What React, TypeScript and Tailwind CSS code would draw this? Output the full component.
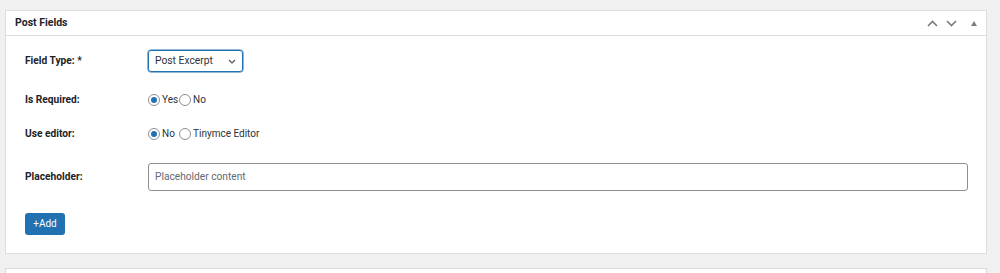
import React from "react";

function Radio({ checked }: { checked?: boolean }) {
  return (
    <span className="flex h-[12px] w-[12px] shrink-0 items-center justify-center rounded-full border border-[#8c8f94] bg-white">
      {checked && <span className="h-[6px] w-[6px] rounded-full bg-[#2271b1]" />}
    </span>
  );
}

function Label({ children }: { children: React.ReactNode }) {
  return <div className="w-[123px] shrink-0 text-[10.2px] font-bold leading-[14px] text-[#1d2327]">{children}</div>;
}

function RadioGroup({ options, value }: { options: string[]; value: string }) {
  return (
    <div className="flex items-center text-[10px] leading-[14px]">
      {options.map((opt, i) => (
        <label key={opt} className={i === 0 ? "flex w-[31px] items-center" : "flex items-center"}>
          <Radio checked={opt === value} />
          <span className="ml-[2px]">{opt}</span>
        </label>
      ))}
    </div>
  );
}

export default function App() {
  return (
    <div className="h-[273px] w-[1000px] overflow-hidden bg-[#f0f0f1] pl-[5px] pr-[13px] pt-[10px] font-['Roboto',sans-serif] text-[#2c3338]">
      <div className="border border-[#dcdcde] bg-white">
        <div className="flex h-[25px] items-center justify-between border-b border-[#dcdcde] pl-[9px] pr-[9px]">
          <h2 className="text-[10.5px] font-bold text-[#1d2327]">Post Fields</h2>
          <div className="flex items-center gap-[8px] text-[#787c82]">
            <svg width="11" height="7" viewBox="0 0 11 7" fill="none" stroke="currentColor" strokeWidth="1.6">
              <path d="M1 6l4.5-4.5L10 6" />
            </svg>
            <svg width="11" height="7" viewBox="0 0 11 7" fill="none" stroke="currentColor" strokeWidth="1.6">
              <path d="M1 1l4.5 4.5L10 1" />
            </svg>
            <svg width="6" height="5" viewBox="0 0 6 5" className="ml-[6px]" fill="currentColor">
              <path d="M3 0L6 5H0z" />
            </svg>
          </div>
        </div>

        <div className="flex flex-col pb-[18px] pl-[19px] pr-[18px] pt-[14px]">
          <div className="flex h-[22px] items-center">
            <Label>Field Type: *</Label>
            <div className="flex h-[22px] w-[95px] items-center justify-between rounded-[3px] border border-[#2271b1] pl-[6px] pr-[6px] text-[10.3px] text-[#2c3338] shadow-[0_0_0_0.5px_#2271b1]">
              <span>Post Excerpt</span>
              <svg width="8" height="5" viewBox="0 0 8 5" fill="none" stroke="#50575e" strokeWidth="1.2">
                <path d="M1 1l3 3 3-3" />
              </svg>
            </div>
          </div>

          <div className="mt-[21px] flex h-[14px] items-center">
            <Label>Is Required:</Label>
            <RadioGroup options={["Yes", "No"]} value="Yes" />
          </div>

          <div className="mt-[20px] flex h-[14px] items-center">
            <Label>Use editor:</Label>
            <RadioGroup options={["No", "Tinymce Editor"]} value="No" />
          </div>

          <div className="mt-[22px] flex h-[28px] items-center">
            <Label>Placeholder:</Label>
            <div className="flex h-[28px] flex-1 items-center rounded-[3px] border border-[#8c8f94] pl-[6px] text-[10.2px] text-[#646970]">
              Placeholder content
            </div>
          </div>

          <div className="mt-[22px] flex h-[22px]">
            <button className="h-[22px] w-[40px] rounded-[3px] bg-[#2271b1] text-[10px] leading-[14px] text-white">+Add</button>
          </div>
        </div>
      </div>
      <div className="mt-[14px] h-[20px] border border-[#dcdcde] bg-white" />
    </div>
  );
}
